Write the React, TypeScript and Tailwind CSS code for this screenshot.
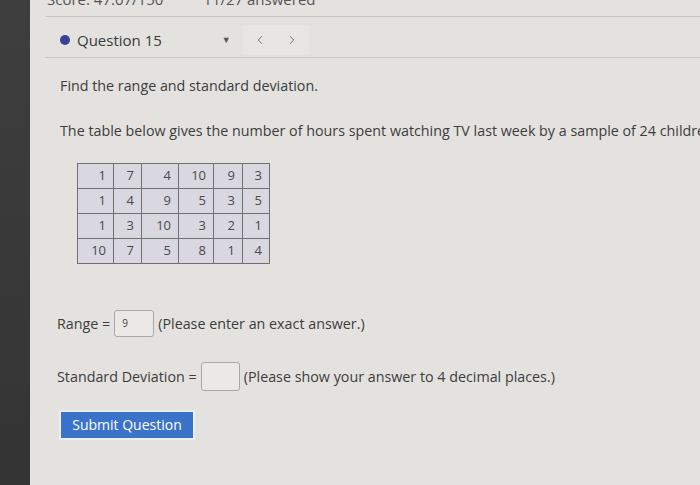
import { ChevronLeft, ChevronRight } from 'lucide-react';

const rows = [
  [1, 7, 4, 10, 9, 3],
  [1, 4, 9, 5, 3, 5],
  [1, 3, 10, 3, 2, 1],
  [10, 7, 5, 8, 1, 4],
];

const colWidths = ['w-[36px]', 'w-[28px]', 'w-[37px]', 'w-[35px]', 'w-[29px]', 'w-[27px]'];

export default function App() {
  return (
    <div className="flex h-[485px] w-[700px] overflow-hidden bg-[#e3e2df] font-['Open_Sans',sans-serif] text-[#3d3d3d]">
      {/* dark screen bezel */}
      <div className="w-[30px] shrink-0 bg-gradient-to-b from-[#3e3e3e] to-[#343434]" />

      <div className="flex-1 pl-[15px]">
        {/* score row, mostly cut off */}
        <div className="h-[17px] overflow-hidden border-b border-[#c9c8c5]">
          <div className="-mt-[12px] flex gap-[40px] pl-[2px] text-[15px] text-[#555]">
            <span>Score: 47.07/150</span>
            <span>11/27 answered</span>
          </div>
        </div>

        {/* question header */}
        <div className="flex h-[41px] items-center border-b border-[#c9c8c5] pt-[6px]">
          <span className="ml-[15px] h-[10px] w-[10px] rounded-full bg-[#3c3f96]" />
          <span className="ml-[7px] text-[15px] text-[#3a3a3a]">Question 15</span>
          <span className="ml-[60px] text-[9px] text-[#555]">▼</span>
          <div className="ml-[12px] flex h-[30px] items-center gap-[18px] bg-[#e7e6e3] px-[10px]">
            <ChevronLeft size={14} strokeWidth={1.5} className="text-[#666]" />
            <ChevronRight size={14} strokeWidth={1.5} className="text-[#666]" />
          </div>
        </div>

        <div className="pl-[15px] text-[14.3px]">
          <p className="mt-[17px]">Find the range and standard deviation.</p>
          <p className="mt-[24px] whitespace-nowrap">
            The table below gives the number of hours spent watching TV last week by a sample of 24 children.
          </p>

          <table className="ml-[17px] mt-[21px] border-collapse bg-[#d9d8e0] text-[13px] text-[#4a4a4a]">
            <tbody>
              {rows.map((r, i) => (
                <tr key={i} className="h-[25px]">
                  {r.map((v, j) => (
                    <td
                      key={j}
                      className={`${colWidths[j]} border border-[#707070] pr-[7px] text-right`}
                    >
                      {v}
                    </td>
                  ))}
                </tr>
              ))}
            </tbody>
          </table>

          <div className="mt-[46px] flex items-center">
            <span className="-ml-[3px]">Range =</span>
            <div className="ml-[4px] flex h-[27px] w-[40px] items-center rounded-[3px] border border-[#a8a8a8] bg-[#e9e8e5] pl-[7px] text-[10px] text-[#444]">
              9
            </div>
            <span className="ml-[4px]">(Please enter an exact answer.)</span>
          </div>

          <div className="mt-[25px] flex items-center">
            <span className="-ml-[3px]">Standard Deviation =</span>
            <div className="ml-[4px] h-[29px] w-[39px] rounded-[3px] border border-[#a8a8a8] bg-[#eae9e6]" />
            <span className="ml-[4px]">(Please show your answer to 4 decimal places.)</span>
          </div>

          <button className="-ml-[1px] mt-[19px] h-[30px] w-[136px] border-2 border-[#eceef2] bg-[#3a73c9] text-[14px] text-white">
            Submit Question
          </button>
        </div>
      </div>
    </div>
  );
}
